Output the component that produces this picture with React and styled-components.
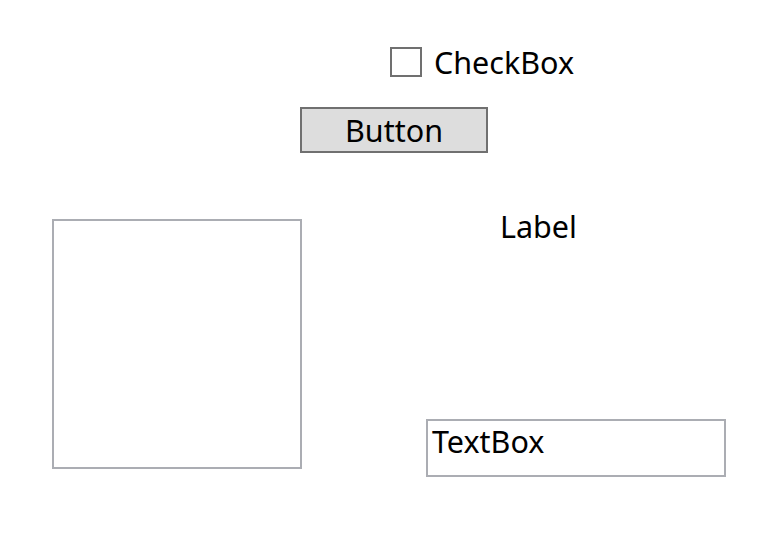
import React from 'react';
import styled, { createGlobalStyle } from 'styled-components';

const Global = createGlobalStyle`
  html, body { margin: 0; padding: 0; background: #fff; }
  body { font-family: "Noto Sans", "Open Sans", sans-serif; }
`;

const Canvas = styled.div`
  position: relative;
  width: 762px;
  height: 535px;
  background: #fff;
  overflow: hidden;
  font-size: 30.5px;
  color: #000;
`;

const Control = styled.div`
  position: absolute;
  left: ${p => p.x}px;
  top: ${p => p.y}px;
  box-sizing: border-box;
`;

const CheckRow = styled(Control)`
  display: flex;
  align-items: center;
  gap: 12px;
  line-height: 1;
`;

const CheckSquare = styled.span`
  width: 32px;
  height: 30px;
  box-sizing: border-box;
  border: 2px solid #707070;
  background: #fff;
`;

const Button = styled(Control)`
  width: 188px;
  height: 46px;
  border: 2px solid #707070;
  background: #dddddd;
  display: flex;
  align-items: center;
  justify-content: center;
  line-height: 1;
`;

const Panel = styled(Control)`
  width: 250px;
  height: 250px;
  border: 2px solid #abadb3;
`;

const Label = styled(Control)`
  line-height: 1;
`;

const TextBox = styled(Control)`
  width: 300px;
  height: 58px;
  border: 2px solid #abadb3;
  padding: 5px 4px;
  line-height: 1;
`;

export default function App() {
  return (
    <Canvas>
      <Global />
      <CheckRow x={390} y={47}>
        <CheckSquare />
        <span>CheckBox</span>
      </CheckRow>
      <Button x={300} y={107}>Button</Button>
      <Label x={500} y={211}>Label</Label>
      <Panel x={52} y={219} />
      <TextBox x={426} y={419}>TextBox</TextBox>
    </Canvas>
  );
}
